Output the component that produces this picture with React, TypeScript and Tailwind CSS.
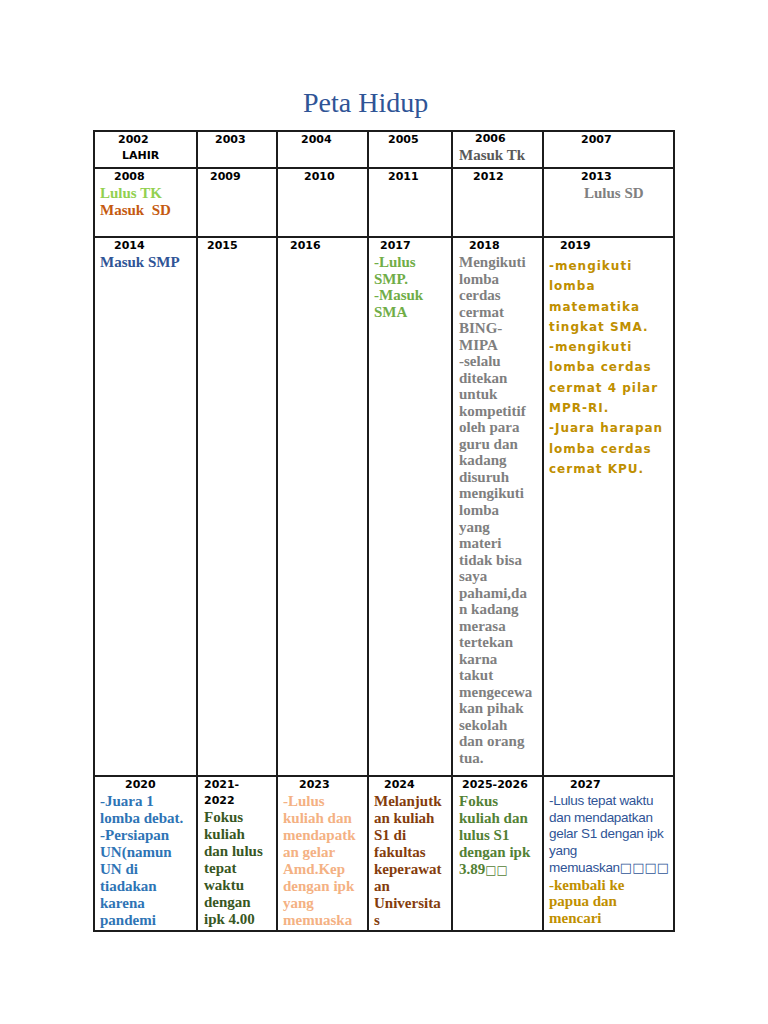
import * as React from 'react';

const yearCls = "font-['DejaVu_Sans',sans-serif] font-bold text-[11px] leading-[16px] text-black whitespace-nowrap";
const serifCls = "font-['Liberation_Serif',serif] font-bold text-[15px] whitespace-nowrap";

const Cell: React.FC<{ children?: React.ReactNode }> = ({ children }) => (
  <div className="overflow-hidden border-r-2 border-b-2 border-[#1c1c1c]">{children}</div>
);

const Lines: React.FC<{ lines: string[]; className: string }> = ({ lines, className }) => (
  <div className={className}>
    {lines.map((l, i) => (
      <div key={i}>{l}</div>
    ))}
  </div>
);

const Boxes: React.FC<{ n: number; className?: string }> = ({ n, className }) => (
  <span className={"font-['DejaVu_Sans',sans-serif] font-normal tracking-normal " + (className ?? '')}>
    {'\u25A1'.repeat(n)}
  </span>
);

export default function App() {
  return (
    <div className="min-h-[1024px] w-[768px] bg-white pt-[87px]">
      <div className="mx-auto w-[582px]">
        <h1 className="h-[32px] pl-[210px] font-['Liberation_Serif',serif] text-[28px] leading-[32px] text-[#2f5496]">
          Peta Hidup
        </h1>

        <div className="mt-[11px] grid grid-cols-[103px_80px_91px_84px_91px_131px] grid-rows-[37px_69px_539px_155px] border-l-2 border-t-2 border-[#1c1c1c]">
          {/* row 1 */}
          <Cell>
            <div className={yearCls + ' pl-[23px]'}>2002</div>
            <div className={yearCls + ' pl-[27px]'}>LAHIR</div>
          </Cell>
          <Cell>
            <div className={yearCls + ' pl-[17px]'}>2003</div>
          </Cell>
          <Cell>
            <div className={yearCls + ' pl-[23px]'}>2004</div>
          </Cell>
          <Cell>
            <div className={yearCls + ' pl-[19px]'}>2005</div>
          </Cell>
          <Cell>
            <div className={yearCls + ' -mt-[1px] pl-[22px]'}>2006</div>
            <div className={serifCls + ' pl-[6px] text-[14px] leading-[16px] text-[#595959]'}>Masuk Tk</div>
          </Cell>
          <Cell>
            <div className={yearCls + ' pl-[37px]'}>2007</div>
          </Cell>

          {/* row 2 */}
          <Cell>
            <div className={yearCls + ' pl-[19px]'}>2008</div>
            <div className={serifCls + ' pl-[5px] leading-[17px] text-[#92d050]'}>Lulus TK</div>
            <div className={serifCls + ' pl-[5px] leading-[17px] text-[#c55a11]'}>Masuk&nbsp; SD</div>
          </Cell>
          <Cell>
            <div className={yearCls + ' pl-[12px]'}>2009</div>
          </Cell>
          <Cell>
            <div className={yearCls + ' pl-[26px]'}>2010</div>
          </Cell>
          <Cell>
            <div className={yearCls + ' pl-[19px]'}>2011</div>
          </Cell>
          <Cell>
            <div className={yearCls + ' pl-[20px]'}>2012</div>
          </Cell>
          <Cell>
            <div className={yearCls + ' pl-[37px]'}>2013</div>
            <div className={serifCls + ' pl-[40px] leading-[17px] text-[#808080]'}>Lulus SD</div>
          </Cell>

          {/* row 3 */}
          <Cell>
            <div className={yearCls + ' pl-[19px]'}>2014</div>
            <div className={serifCls + ' pl-[5px] leading-[17px] text-[#2f5496]'}>Masuk SMP</div>
          </Cell>
          <Cell>
            <div className={yearCls + ' pl-[9px]'}>2015</div>
          </Cell>
          <Cell>
            <div className={yearCls + ' pl-[12px]'}>2016</div>
          </Cell>
          <Cell>
            <div className={yearCls + ' pl-[11px]'}>2017</div>
            <Lines
              lines={['-Lulus', 'SMP.', '-Masuk', 'SMA']}
              className={serifCls + ' pl-[5px] leading-[16.5px] text-[#70ad47]'}
            />
          </Cell>
          <Cell>
            <div className={yearCls + ' pl-[16px]'}>2018</div>
            <Lines
              lines={[
                'Mengikuti',
                'lomba',
                'cerdas',
                'cermat',
                'BING-',
                'MIPA',
                '-selalu',
                'ditekan',
                'untuk',
                'kompetitif',
                'oleh para',
                'guru dan',
                'kadang',
                'disuruh',
                'mengikuti',
                'lomba',
                'yang',
                'materi',
                'tidak bisa',
                'saya',
                'pahami,da',
                'n kadang',
                'merasa',
                'tertekan',
                'karna',
                'takut',
                'mengecewa',
                'kan pihak',
                'sekolah',
                'dan orang',
                'tua.',
              ]}
              className={serifCls + ' pl-[6px] leading-[16.53px] text-[#7f7f7f]'}
            />
          </Cell>
          <Cell>
            <div className={yearCls + ' pl-[16px]'}>2019</div>
            <Lines
              lines={[
                '-mengikuti',
                'lomba',
                'matematika',
                'tingkat SMA.',
                '-mengikuti',
                'lomba cerdas',
                'cermat 4 pilar',
                'MPR-RI.',
                '-Juara harapan',
                'lomba cerdas',
                'cermat KPU.',
              ]}
              className="whitespace-nowrap pl-[5px] pt-[2px] font-['DejaVu_Sans',sans-serif] text-[12px] font-bold leading-[20.3px] tracking-[1px] text-[#bf8f00]"
            />
          </Cell>

          {/* row 4 */}
          <Cell>
            <div className={yearCls + ' pl-[30px]'}>2020</div>
            <Lines
              lines={['-Juara 1', 'lomba debat.', '-Persiapan', 'UN(namun', 'UN di', 'tiadakan', 'karena', 'pandemi']}
              className={serifCls + ' pl-[5px] leading-[17px] text-[#2e74b5]'}
            />
          </Cell>
          <Cell>
            <div className={yearCls + ' pl-[6px]'}>2021-</div>
            <div className={yearCls + ' pl-[6px]'}>2022</div>
            <Lines
              lines={['Fokus', 'kuliah', 'dan lulus', 'tepat', 'waktu', 'dengan', 'ipk 4.00']}
              className={serifCls + ' pl-[6px] leading-[17px] text-[#385723]'}
            />
          </Cell>
          <Cell>
            <div className={yearCls + ' pl-[21px]'}>2023</div>
            <Lines
              lines={['-Lulus', 'kuliah dan', 'mendapatk', 'an gelar', 'Amd.Kep', 'dengan ipk', 'yang', 'memuaska']}
              className={serifCls + ' pl-[5px] leading-[17px] text-[#f4b183]'}
            />
          </Cell>
          <Cell>
            <div className={yearCls + ' pl-[15px]'}>2024</div>
            <Lines
              lines={['Melanjutk', 'an kuliah', 'S1 di', 'fakultas', 'keperawat', 'an', 'Universita', 's']}
              className={serifCls + ' pl-[5px] leading-[17px] text-[#843c0c]'}
            />
          </Cell>
          <Cell>
            <div className={yearCls + ' pl-[9px]'}>2025-2026</div>
            <div className={serifCls + ' pl-[6px] leading-[17px] text-[#538135]'}>
              <div>Fokus</div>
              <div>kuliah dan</div>
              <div>lulus S1</div>
              <div>dengan ipk</div>
              <div>
                3.89<Boxes n={2} className="text-[12px]" />
              </div>
            </div>
          </Cell>
          <Cell>
            <div className={yearCls + ' pl-[26px]'}>2027</div>
            <div className="whitespace-nowrap pl-[5px] font-['Liberation_Sans',sans-serif] text-[13.5px] leading-[16.7px] tracking-[-0.3px] text-[#2f5496]">
              <div>-Lulus tepat waktu</div>
              <div>dan mendapatkan</div>
              <div>gelar S1 dengan ipk</div>
              <div>yang</div>
              <div>
                memuaskan<Boxes n={4} className="text-[13px]" />
              </div>
            </div>
            <Lines
              lines={['-kembali ke', 'papua dan', 'mencari']}
              className={serifCls + ' pl-[5px] leading-[16.7px] text-[#bf8f00]'}
            />
          </Cell>
        </div>
      </div>
    </div>
  );
}
